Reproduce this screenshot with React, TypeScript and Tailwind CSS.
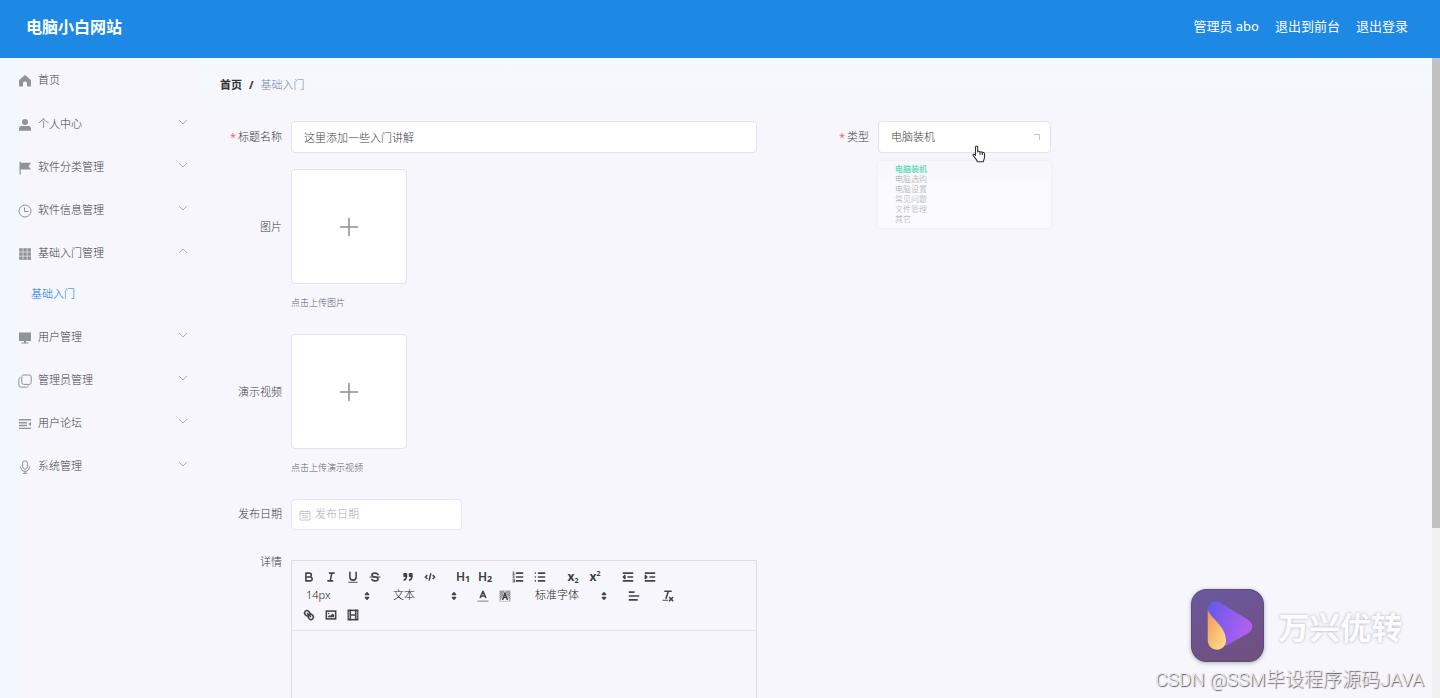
import React from "react";

type IconProps = { children: React.ReactNode; className?: string };

function MenuIcon({ children }: { children: React.ReactNode }) {
  return (
    <svg viewBox="0 0 14 14" className="size-[14px] shrink-0" fill="none" stroke="#909399" aria-hidden="true">
      {children}
    </svg>
  );
}

function ToolIcon({ children, className = "" }: IconProps) {
  return (
    <svg
      viewBox="0 0 18 18"
      className={`size-[14px] ${className}`}
      fill="none"
      stroke="#444"
      strokeWidth="2"
      strokeLinecap="round"
      strokeLinejoin="round"
      aria-hidden="true"
    >
      {children}
    </svg>
  );
}

const icons: Record<string, React.ReactNode> = {
  home: <path d="M7 1 13 6.2V12.6H9V9.4a2 2 0 0 0-4 0v3.2H1V6.2Z" fill="#909399" stroke="none" />,
  user: (
    <g fill="#909399" stroke="none">
      <circle cx="7" cy="4" r="3" />
      <path d="M1 12.8V10.4A2.4 2.4 0 0 1 3.4 8h7.200A2.4 2.4 0 0 1 13 10.400v2.400Z" />
    </g>
  ),
  flag: <path d="M1.500 0.800h1.200v1H13L10.500 5.200 13 8.600H2.700v5H1.500Z" fill="#909399" stroke="none" />,
  clock: (
    <g strokeWidth="1">
      <circle cx="7" cy="7" r="6" />
      <path d="M6.500 3.500v4h4" />
    </g>
  ),
  grid: (
    <g fill="#909399" stroke="none">
      {[1.2, 5.3, 9.4].map((y) => [1.2, 5.3, 9.4].map((x) => <rect key={`${x}-${y}`} x={x} y={y} width="3.500" height="3.500" />))}
    </g>
  ),
  monitor: (
    <g fill="#909399" stroke="none">
      <path d="M1 1.500h12v8.500H1ZM6 10h2v1.500H6ZM3.500 11.400h7v1h-7Z" />
    </g>
  ),
  copy: (
    <g strokeWidth="1">
      <rect x="3.800" y="1" width="9.400" height="9.400" rx="1.800" />
      <path d="M2.600 3.600C1.300 3.800.8 4.500.8 5.600V11a2.200 2.200 0 0 0 2.200 2.200h5.400c1.100 0 1.800-.5 2-1.600" />
    </g>
  ),
  fold: (
    <g>
      <path d="M1 2.800h12M1 5.700h8M1 8.500h8M1 11.400h12" strokeWidth="1.400" />
      <path d="M13 5v4L10 7Z" fill="#909399" stroke="none" />
    </g>
  ),
  mic: (
    <g strokeWidth="1">
      <rect x="4.600" y="0.800" width="4.800" height="8.400" rx="2.400" />
      <path d="M2.600 6.500c0 3.500 1.800 4.800 4.400 4.800s4.400-1.300 4.400-4.800M7 11.300v2.200M4.800 13.400h4.400" />
    </g>
  ),
};

function Chevron({ up = false }: { up?: boolean }) {
  return (
    <svg viewBox="0 0 10 6" className="mb-1.5 ml-auto h-[6px] w-[10px]" fill="none" stroke="#a9adb5" strokeWidth="1" aria-hidden="true">
      <path d={up ? "M1 5 5 1l4 4" : "M1 1l4 4 4-4"} />
    </svg>
  );
}

const menu = [
  { icon: "user", label: "个人中心" },
  { icon: "flag", label: "软件分类管理" },
  { icon: "clock", label: "软件信息管理" },
  { icon: "grid", label: "基础入门管理", children: ["基础入门"] },
  { icon: "monitor", label: "用户管理" },
  { icon: "copy", label: "管理员管理" },
  { icon: "fold", label: "用户论坛" },
  { icon: "mic", label: "系统管理" },
];

function Sidebar() {
  return (
    <nav className="w-[200px] shrink-0 bg-linear-to-r from-[#f3f8ff] from-8% to-[#f6f6fc] to-10%">
      <a href="#home" className="flex h-[45px] items-center gap-1.5 pl-[18px]">
        <MenuIcon>{icons.home}</MenuIcon>首页
      </a>
      {menu.map((m) => (
        <div key={m.label}>
          <button type="button" aria-expanded={!!m.children} className="flex h-[43px] w-full items-center gap-1.5 pr-3 pl-[18px] text-left">
            <MenuIcon>{icons[m.icon]}</MenuIcon>
            {m.label}
            <Chevron up={!!m.children} />
          </button>
          {m.children?.map((c) => (
            <a key={c} href="#basics" className="flex h-[41px] items-center pb-0.5 pl-[31px] text-[#0578e0]">
              {c}
            </a>
          ))}
        </div>
      ))}
    </nav>
  );
}

function Label({ children, required, htmlFor, className = "" }: IconProps & { required?: boolean; htmlFor: string }) {
  return (
    <label htmlFor={htmlFor} className={`w-[71px] shrink-0 pr-[9px] text-right whitespace-nowrap ${className}`}>
      {required && <span className="mr-0.5 font-normal text-[#f56c6c]">*</span>}
      {children}
    </label>
  );
}

function Upload({ id, label, hint }: { id: string; label: string; hint: string }) {
  return (
    <div className="mt-4 flex">
      <Label htmlFor={id} className="leading-[115px]">{label}</Label>
      <div>
        <button id={id} type="button" aria-label={hint} className="flex h-[115px] w-[116px] items-center justify-center rounded-[4px] border border-[#e2e3ec] bg-white">
          <svg viewBox="0 0 20 20" className="size-5" stroke="#8c8f96" strokeWidth="1.500" aria-hidden="true">
            <path d="M1 10h18M10 1v18" />
          </svg>
        </button>
        <p className="mt-1 text-[9px] leading-[30px] text-[#5d6270]">{hint}</p>
      </div>
    </div>
  );
}

function Tool({ label, children, className = "w-[22px]" }: { label: string; children: React.ReactNode; className?: string }) {
  return (
    <button type="button" aria-label={label} className={`flex h-[19px] items-center justify-center text-[#3c3c40] ${className}`}>
      {children}
    </button>
  );
}

function Group({ children }: { children: React.ReactNode }) {
  return <div className="mr-[11px] flex">{children}</div>;
}

function Picker({ label, value, className }: { label: string; value: string; className: string }) {
  return (
    <div className={`relative mr-[11px] flex h-[19px] items-center ${className}`}>
      <select aria-label={label} className="h-full w-full appearance-none bg-transparent pl-2 text-[#222] outline-none">
        <option>{value}</option>
      </select>
      <ToolIcon className="pointer-events-none absolute right-0">
        <path d="M7 11l2 2 2-2ZM7 7l2-2 2 2Z" fill="#444" />
      </ToolIcon>
    </div>
  );
}

function Editor() {
  return (
    <div className="w-[466px] max-w-full border border-[#dcdce2]">
      <div className="flex flex-wrap border-b border-[#e4e4ec] px-1.5 py-1.5">
        <Group>
          <Tool label="加粗">
            <ToolIcon>
              <path d="M5 4h4.500a2.500 2.500 0 0 1 0 5H5ZM5 9h5.500a2.500 2.500 0 0 1 0 5H5Z" />
            </ToolIcon>
          </Tool>
          <Tool label="斜体">
            <ToolIcon><path d="M7 4h6M5 14h6M8 14l2-10" /></ToolIcon>
          </Tool>
          <Tool label="下划线">
            <ToolIcon>
              <path d="M5 3v6a4 4 0 0 0 8 0V3" />
              <path d="M3.500 15.800h11" strokeWidth="1.200" />
            </ToolIcon>
          </Tool>
          <Tool label="删除线">
            <ToolIcon>
              <path d="M13 6C12.500 4.800 11 4 9 4 6.700 4 5 5.100 5 6.500S6 8.700 9 9s4 1 4 2.500S11.300 14 9 14c-2 0-3.500-.8-4-2" />
              <path d="M2.500 9h13" strokeWidth="1.200" />
            </ToolIcon>
          </Tool>
        </Group>
        <Group>
          <Tool label="引用">
            <ToolIcon>
              <path d="M4 5h3v3H4ZM11 5h3v3h-3Z" fill="#444" />
              <path d="M7 8c0 4-3 5-3 5M14 8c0 4-3 5-3 5" />
            </ToolIcon>
          </Tool>
          <Tool label="代码">
            <ToolIcon><path d="M5 7 3 9l2 2M13 7l2 2-2 2M10 5 8 13" /></ToolIcon>
          </Tool>
        </Group>
        <Group>
          <Tool label="标题 1"><span className="text-xs font-semibold">H</span><span className="mt-1 text-[9px] leading-none font-bold">1</span></Tool>
          <Tool label="标题 2"><span className="text-xs font-semibold">H</span><span className="mt-1 text-[9px] leading-none font-bold">2</span></Tool>
        </Group>
        <Group>
          <Tool label="有序列表">
            <ToolIcon>
              <path d="M7 4h8M7 9h8M7 14h8" />
              <path d="M2.500 2.500h1v3M2.300 5.500h2.200M2.300 7.600h2L2.500 10.300h2M2.400 12.500h2v3h-2M3 14h1" strokeWidth="1" />
            </ToolIcon>
          </Tool>
          <Tool label="无序列表">
            <ToolIcon><path d="M7 4h8M7 9h8M7 14h8M3 4h.01M3 9h.01M3 14h.01" /></ToolIcon>
          </Tool>
        </Group>
        <Group>
          <Tool label="下标"><span className="text-xs font-bold">x</span><span className="mt-2 text-[7px] leading-none font-bold">2</span></Tool>
          <Tool label="上标"><span className="text-xs font-bold">x</span><span className="mb-1.5 text-[7px] leading-none font-bold">2</span></Tool>
        </Group>
        <Group>
          <Tool label="减少缩进">
            <ToolIcon><path d="M3 4h12M9 9h6M3 14h12" /><path d="M5 7v4L3 9Z" fill="#444" /></ToolIcon>
          </Tool>
          <Tool label="增加缩进">
            <ToolIcon><path d="M3 4h12M9 9h6M3 14h12" /><path d="M3 7v4l2-2Z" fill="#444" /></ToolIcon>
          </Tool>
        </Group>
        <Picker label="字号" value="14px" className="w-[76px]" />
        <Picker label="标题" value="文本" className="w-[76px]" />
        <Group>
          <Tool label="文字颜色">
            <ToolIcon>
              <path d="M5.500 11 9 3l3.500 8M6.500 9h5" />
              <path d="M2.500 15.500h13" stroke="#999" strokeWidth="1.600" />
            </ToolIcon>
          </Tool>
          <Tool label="背景颜色">
            <ToolIcon>
              <defs>
                <pattern id="dots" width="3" height="3" patternUnits="userSpaceOnUse">
                  <path d="M0 0h1.500v1.500H0ZM1.500 1.500H3V3H1.500Z" fill="#444" stroke="none" />
                </pattern>
              </defs>
              <rect x="2" y="2" width="14" height="14" fill="url(#dots)" stroke="none" />
              <path d="M9 1.500 3 15.500h12Z" fill="#f6f6fc" stroke="none" />
              <path d="M6 13.500 9 5l3 8.500M7 11h4" />
            </ToolIcon>
          </Tool>
        </Group>
        <Picker label="字体" value="标准字体" className="w-[84px]" />
        <Group>
          <Tool label="对齐" className="w-6">
            <ToolIcon><path d="M3 4h6M3 9h12M3 14h10" /></ToolIcon>
          </Tool>
        </Group>
        <Group>
          <Tool label="清除格式">
            <ToolIcon>
              <path d="M5 3h8M6.500 12 9.500 3M11 11l4 4M15 11l-4 4" />
              <path d="M2.500 14.500h6" strokeWidth="1.200" />
            </ToolIcon>
          </Tool>
        </Group>
        <div className="flex w-full">
          <Tool label="链接">
            <ToolIcon>
              <path d="m7 7 4 4" />
              <path d="M8.900 4.577a3.476 3.476 0 0 1 .36 4.679A3.476 3.476 0 0 1 4.577 8.900C3.185 7.500 2.035 6.400 4.217 4.217S7.500 3.185 8.900 4.577Z" />
              <path d="M13.423 9.100a3.476 3.476 0 0 0-4.679-.36 3.476 3.476 0 0 0 .36 4.679c1.392 1.392 2.500 2.542 4.679.36S14.815 10.500 13.423 9.100Z" />
            </ToolIcon>
          </Tool>
          <Tool label="图片">
            <ToolIcon>
              <rect x="3" y="4" width="12" height="10" strokeLinejoin="miter" />
              <circle cx="6" cy="7" r="1" fill="#444" stroke="none" />
              <path d="M5 12v-1l2-2 1 1 3-3 2 2v3Z" fill="#444" stroke="none" />
            </ToolIcon>
          </Tool>
          <Tool label="视频">
            <ToolIcon>
              <rect x="3" y="3" width="12" height="12" strokeLinejoin="miter" />
              <path d="M5.500 3v12M12.500 3v12M6 9h6" />
              <path d="M3 6h1.500M3 9h1.500M3 12h1.500M13.500 6H15M13.500 9H15M13.500 12H15" stroke="#f6f6fc" strokeWidth="0.800" strokeLinecap="butt" />
            </ToolIcon>
          </Tool>
        </div>
      </div>
      <textarea id="detail" className="block h-[280px] w-full resize-none bg-transparent p-3 outline-none" />
    </div>
  );
}

const types = ["电脑装机", "电脑选购", "电脑设置", "常见问题", "文件管理", "其它"];

function TypeSelect() {
  return (
    <div className="relative w-[173px]">
      <select id="type" className="h-8 w-full appearance-none rounded-[4px] border border-[#e2e3ec] bg-white px-3 outline-none">
        {types.map((t) => (
          <option key={t}>{t}</option>
        ))}
      </select>
      <svg viewBox="0 0 8 8" className="pointer-events-none absolute top-3 right-2.5 size-2" fill="none" stroke="#c0c4cc" aria-hidden="true">
        <path d="M1 1.500h5.500V7" />
      </svg>
      <ul className="absolute top-10 left-0 w-full rounded-[4px] bg-linear-to-b from-[#f7f7fc] from-20% to-[#fbfbff] to-30% pt-[3px] pb-1 text-[#a3a4ac] shadow-[0_0_4px_rgba(120,120,160,0.08)]">
        {types.map((t, i) => (
          <li key={t} className={i === 0 ? "px-[17px] text-[8px] leading-[10px] font-bold text-[#6fdcc0]" : "px-[17px] text-[8px] leading-[10px]"}>
            {t}
          </li>
        ))}
      </ul>
      <svg viewBox="0 0 14 18" className="pointer-events-none absolute top-6 left-[94px] h-[18px] w-[14px]" fill="#fff" stroke="#333" strokeWidth="1.100" strokeLinejoin="round" aria-hidden="true">
        <path d="M3.500 10.500V2.200c0-1.600 2.200-1.600 2.200 0V7c.2-1 2.200-.9 2.300.3.400-.9 2.200-.7 2.300.5.500-.8 2.200-.5 2.200 1v3.500c0 2-1 2.700-1.300 4.500H5.500C5 14.500 2.500 12.500 1.200 10.500.5 9.200 2 8.300 3.500 10.500Z" />
        <path d="M8 7.200v2.600M10.300 7.800v2.200" />
      </svg>
    </div>
  );
}

function Watermark() {
  return (
    <div className="pointer-events-none absolute right-4 bottom-1 flex flex-col items-start">
      <div className="flex items-center gap-3.5 pl-9">
        <svg viewBox="0 0 72 72" className="size-[73px] drop-shadow-[0_1px_2px_rgba(0,0,0,0.3)]" aria-hidden="true">
          <defs>
            <linearGradient id="tile" x2="0.3" y2="1">
              <stop stopColor="#6a58a0" />
              <stop offset="1" stopColor="#705082" />
            </linearGradient>
            <linearGradient id="play" x2="1" y2="0.3">
              <stop stopColor="#6258ea" />
              <stop offset="1" stopColor="#b25ff0" />
            </linearGradient>
            <linearGradient id="drop" x2="0.8" y2="1">
              <stop stopColor="#ee9458" />
              <stop offset="1" stopColor="#ffdc88" />
            </linearGradient>
          </defs>
          <rect x="0.500" y="0.500" width="71" height="71" rx="15" fill="url(#tile)" stroke="#58506f" />
          <path d="M16.500 20C17 13 23.500 10.500 29 13.500L56.500 30.500C62 34 61.500 40 56.500 43.500L34 56.500Z" fill="url(#play)" />
          <path d="M16.500 19.500C17.500 28 34.500 36 34.500 50.500 34.500 63 16.500 63 16.500 50Z" fill="url(#drop)" />
        </svg>
        <span className="pt-1 text-[31px] font-bold text-[#fcfcff] [text-shadow:0_0_3px_rgba(90,90,110,0.45)]">万兴优转</span>
      </div>
      <span className="mt-1 font-[Roboto,'Noto_Sans_CJK_SC',sans-serif] text-[19px] leading-7 font-light whitespace-nowrap text-[#e8e8ee] [text-shadow:1px_1px_1px_#555]">
        CSDN @SSM毕设程序源码JAVA
      </span>
    </div>
  );
}

export default function App() {
  return (
    <div className="relative flex h-screen flex-col overflow-hidden bg-[#f6f6fc] font-['Noto_Sans','Noto_Sans_CJK_SC',sans-serif] text-[11px] font-light text-[#3e4045]">
      <header className="flex h-[58px] shrink-0 items-center justify-between bg-[#1e88e5] pr-8 pb-1 pl-[26px] font-normal text-white">
        <h1 className="text-[16px] font-bold">电脑小白网站</h1>
        <div className="flex gap-4 text-[13px]">
          <span>管理员 abo</span>
          <a href="#front">退出到前台</a>
          <a href="#logout">退出登录</a>
        </div>
      </header>
      <div className="flex min-h-0 flex-1">
        <Sidebar />
        <main className="min-w-0 flex-1 overflow-hidden bg-linear-to-b from-[#f4f9fd] to-[#f6f6fc] to-10% pr-[38px] pl-5">
          <nav aria-label="面包屑" className="flex h-[54px] items-center text-[#303133]">
            <a href="#home" className="font-bold">首页</a>
            <span className="mx-[7px] font-bold">/</span>
            <span className="text-[#7585a8]">基础入门</span>
          </nav>
          <form className="mt-[9px]">
            <div className="grid grid-cols-2">
              <div className="flex items-center">
                <Label required htmlFor="title">标题名称</Label>
                <input id="title" defaultValue="这里添加一些入门讲解" className="h-8 w-[466px] max-w-full rounded-[4px] border border-[#e2e3ec] bg-white px-3 outline-none" />
              </div>
              <div className="flex items-center">
                <Label required htmlFor="type">类型</Label>
                <TypeSelect />
              </div>
            </div>
            <Upload id="image" label="图片" hint="点击上传图片" />
            <Upload id="video" label="演示视频" hint="点击上传演示视频" />
            <div className="mt-4 flex items-center">
              <Label htmlFor="date">发布日期</Label>
              <div className="relative flex items-center">
                <input id="date" placeholder="发布日期" className="h-[31px] w-[171px] rounded-[4px] border border-[#e8e9f0] bg-white pb-0.5 pl-[23px] outline-none placeholder:text-[#a8adb6]" />
                <svg viewBox="0 0 12 12" className="absolute left-2 size-3" fill="none" stroke="#c0c4cc" aria-hidden="true">
                  <path d="M1 2.500h10v8.500H1ZM1 4.500h10M3.500 1v2.500M8.500 1v2.500M3 6.700h6M3 8.700h6" strokeWidth="0.900" />
                </svg>
              </div>
            </div>
            <div className="mt-[30px] flex">
              <Label htmlFor="detail" className="-mt-1 leading-none">详情</Label>
              <Editor />
            </div>
          </form>
        </main>
        <div className="w-2 shrink-0 bg-[#f0f0f1]" aria-hidden="true">
          <div className="h-[73.5%] bg-[#c1c1c1]" />
        </div>
      </div>
      <Watermark />
    </div>
  );
}
